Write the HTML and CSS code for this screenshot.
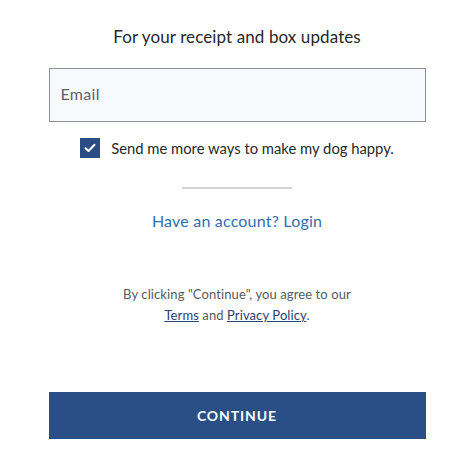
FILE: index.html
```html
<!DOCTYPE html>
<html lang="en">
<head>
    <meta charset="UTF-8">
    <meta name="viewport" content="width=device-width, initial-scale=1.0">
    <title>Sign up</title>
    <link rel="stylesheet" href="styles.css">
</head>
<body>
    <div class="signup">
        <h2 class="subtitle">For your receipt and box updates</h2>
        <input class="email-input" type="email" placeholder="Email">
        <label class="optin">
            <span class="checkbox">
                <svg width="12" height="10" viewBox="0 0 12 10"><path d="M1.5 5.2 L4.5 8 L10.5 1.8" fill="none" stroke="#fff" stroke-width="2" stroke-linecap="round" stroke-linejoin="round"/></svg>
            </span>
            <span class="optin-text">Send me more ways to make my dog happy.</span>
        </label>
        <hr class="divider">
        <a class="login-link" href="#">Have an account? Login</a>
        <p class="legal">By clicking "Continue", you agree to our<br><a href="#">Terms</a> and <a href="#">Privacy Policy</a>.</p>
        <button class="continue-btn">CONTINUE</button>
    </div>
</body>
</html>
```

FILE: styles.css
```css
* {
    margin: 0;
    padding: 0;
    box-sizing: border-box;
}

body {
    font-family: 'Lato', 'Open Sans', sans-serif;
    background: #fff;
    color: #222;
}

.signup {
    width: 377px;
    margin: 0 auto;
    padding-top: 26px;
    display: flex;
    flex-direction: column;
    align-items: center;
}

.subtitle {
    font-size: 17px;
    font-weight: 400;
    line-height: 22px;
    color: #26282b;
    letter-spacing: 0.1px;
}

.email-input {
    margin-top: 20px;
    width: 100%;
    height: 54px;
    border: 1px solid #8b9099;
    background: #f7f9fd;
    padding: 0 11px 3px;
    font-family: inherit;
    font-size: 16px;
    color: #222;
    outline: none;
}

.email-input::placeholder {
    color: #5f636a;
    letter-spacing: 0.3px;
}

.optin {
    margin-top: 16px;
    display: flex;
    align-items: center;
    gap: 11px;
    cursor: pointer;
}

.checkbox {
    width: 20px;
    height: 20px;
    background: #2b4c85;
    display: flex;
    align-items: center;
    justify-content: center;
}

.optin-text {
    font-size: 14.8px;
    color: #26282b;
    letter-spacing: 0;
}

.divider {
    margin-top: 29px;
    width: 110px;
    border: none;
    border-top: 2px solid #d2d3d5;
}

.login-link {
    margin-top: 22px;
    font-size: 16px;
    color: #3070ad;
    text-decoration: none;
    letter-spacing: 0.2px;
}

.legal {
    margin-top: 54px;
    font-size: 13px;
    line-height: 21px;
    color: #555a62;
    text-align: center;
    letter-spacing: 0.1px;
}

.legal a {
    color: #2a4272;
}

.continue-btn {
    margin-top: 66px;
    width: 100%;
    height: 47px;
    background: #2a4f87;
    color: #fff;
    border: none;
    font-family: inherit;
    font-size: 14px;
    font-weight: 700;
    letter-spacing: 0.9px;
    cursor: pointer;
}
```
